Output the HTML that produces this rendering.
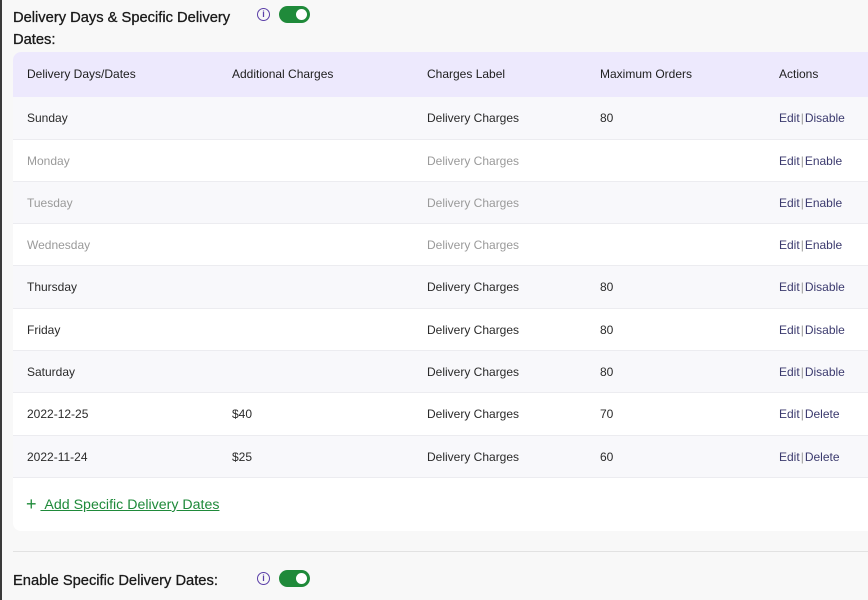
<!DOCTYPE html>
<html><head><style>
body{margin:0;width:868px;height:600px;overflow:hidden;background:#f8f8f8;font-family:"Liberation Sans",sans-serif;position:relative;border-left:2px solid #3a3a3a;box-sizing:border-box}
.h{position:absolute;left:11px;font-size:14.7px;color:#1a1a1a;line-height:22px;-webkit-text-stroke:0.3px #1a1a1a}
.info{position:absolute;width:11px;height:11px;border:1.3px solid #5b3fa8;border-radius:50%;font-size:9px;color:#5b3fa8;text-align:center;line-height:11px;font-weight:bold}
.tog{position:absolute;width:31px;height:17px;background:#1f8a3a;border-radius:9px}
.tog:after{content:"";position:absolute;right:3px;top:3px;width:11px;height:11px;border-radius:50%;background:#fff}
.card{position:absolute;left:11px;top:52px;width:870px;height:479px;background:#fff;border-radius:8px;overflow:hidden}
.row{position:absolute;left:0;width:870px;font-size:12px;color:#2a2a2a;border-bottom:1px solid #ececf0;box-sizing:border-box}
.row span{position:absolute;top:0}
.hd{background:#ede9fd;color:#1e1e1e}
.alt{background:#f8f8fb}
.dis{color:#9a9a9a}
.a{color:#3b3a6e}
.sep{color:#999;margin:0 1px}
</style></head><body>
<div class="h" style="top:7px">Delivery Days &amp; Specific Delivery<br>Dates:</div>
<div class="info" style="left:255px;top:8px">i</div>
<div class="tog" style="left:277px;top:6px"></div>
<div class="card">
<div class="row hd" style="top:0;height:45px;line-height:45px;border:0"><span style="left:14px">Delivery Days/Dates</span><span style="left:219px">Additional Charges</span><span style="left:414px">Charges Label</span><span style="left:587px">Maximum Orders</span><span style="left:766px">Actions</span></div>
<div class="row alt" style="top:45px;height:43px;line-height:42px"><span style="left:14px">Sunday</span><span style="left:414px">Delivery Charges</span><span style="left:587px">80</span><span style="left:766px" class="a">Edit<span class="sep" style="position:static">|</span>Disable</span></div>
<div class="row dis" style="top:88px;height:42px;line-height:42px"><span style="left:14px">Monday</span><span style="left:414px">Delivery Charges</span><span style="left:766px" class="a">Edit<span class="sep" style="position:static">|</span>Enable</span></div>
<div class="row dis alt" style="top:130px;height:42px;line-height:42px"><span style="left:14px">Tuesday</span><span style="left:414px">Delivery Charges</span><span style="left:766px" class="a">Edit<span class="sep" style="position:static">|</span>Enable</span></div>
<div class="row dis" style="top:172px;height:42px;line-height:42px"><span style="left:14px">Wednesday</span><span style="left:414px">Delivery Charges</span><span style="left:766px" class="a">Edit<span class="sep" style="position:static">|</span>Enable</span></div>
<div class="row alt" style="top:214px;height:43px;line-height:43px"><span style="left:14px">Thursday</span><span style="left:414px">Delivery Charges</span><span style="left:587px">80</span><span style="left:766px" class="a">Edit<span class="sep" style="position:static">|</span>Disable</span></div>
<div class="row" style="top:257px;height:42px;line-height:42px"><span style="left:14px">Friday</span><span style="left:414px">Delivery Charges</span><span style="left:587px">80</span><span style="left:766px" class="a">Edit<span class="sep" style="position:static">|</span>Disable</span></div>
<div class="row alt" style="top:299px;height:42px;line-height:43px"><span style="left:14px">Saturday</span><span style="left:414px">Delivery Charges</span><span style="left:587px">80</span><span style="left:766px" class="a">Edit<span class="sep" style="position:static">|</span>Disable</span></div>
<div class="row" style="top:341px;height:43px;line-height:43px"><span style="left:14px">2022-12-25</span><span style="left:219px">$40</span><span style="left:414px">Delivery Charges</span><span style="left:587px">70</span><span style="left:766px" class="a">Edit<span class="sep" style="position:static">|</span>Delete</span></div>
<div class="row alt" style="top:384px;height:42px;line-height:42px"><span style="left:14px">2022-11-24</span><span style="left:219px">$25</span><span style="left:414px">Delivery Charges</span><span style="left:587px">60</span><span style="left:766px" class="a">Edit<span class="sep" style="position:static">|</span>Delete</span></div>
<div style="position:absolute;left:13px;top:442px;font-size:14.2px;color:#1f8a3a"><span style="font-size:18px;vertical-align:-1px">+</span> <span style="text-decoration:underline">&nbsp;Add Specific Delivery Dates</span></div>
</div>
<div style="position:absolute;left:11px;top:551px;width:860px;height:1px;background:#e2e2e2"></div>
<div class="h" style="top:570px">Enable Specific Delivery Dates:</div>
<div class="info" style="left:255px;top:572px">i</div>
<div class="tog" style="left:277px;top:570px"></div>
</body></html>
